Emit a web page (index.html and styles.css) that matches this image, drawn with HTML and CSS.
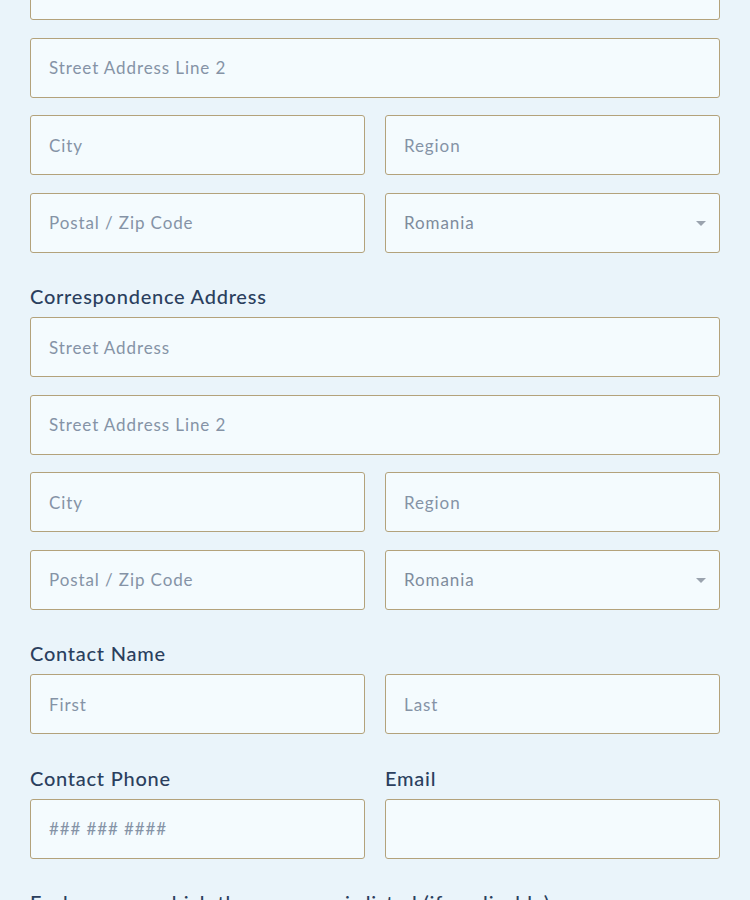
FILE: index.html
```html
<!DOCTYPE html>
<html lang="en">
<head>
<meta charset="utf-8">
<title>Company Form</title>
<link rel="stylesheet" href="styles.css">
</head>
<body>
<form class="form">
  <div class="row full"><input class="field" type="text" placeholder="Street Address"></div>
  <div class="row full"><input class="field" type="text" placeholder="Street Address Line 2"></div>
  <div class="row">
    <input class="field" type="text" placeholder="City">
    <input class="field" type="text" placeholder="Region">
  </div>
  <div class="row">
    <input class="field" type="text" placeholder="Postal / Zip Code">
    <div class="select-wrap"><select class="field select"><option>Romania</option></select></div>
  </div>

  <div class="label">Correspondence Address</div>
  <div class="row full"><input class="field" type="text" placeholder="Street Address"></div>
  <div class="row full"><input class="field" type="text" placeholder="Street Address Line 2"></div>
  <div class="row">
    <input class="field" type="text" placeholder="City">
    <input class="field" type="text" placeholder="Region">
  </div>
  <div class="row">
    <input class="field" type="text" placeholder="Postal / Zip Code">
    <div class="select-wrap"><select class="field select"><option>Romania</option></select></div>
  </div>

  <div class="label">Contact Name</div>
  <div class="row">
    <input class="field" type="text" placeholder="First">
    <input class="field" type="text" placeholder="Last">
  </div>

  <div class="row pair">
    <div class="group">
      <div class="label">Contact Phone</div>
      <input class="field" type="text" placeholder="### ### ####">
    </div>
    <div class="group">
      <div class="label">Email</div>
      <input class="field" type="text">
    </div>
  </div>

  <div class="label">Exchange on which the company is listed (if applicable)</div>
  <div class="row full"><input class="field" type="text"></div>
</form>
</body>
</html>
```
FILE: styles.css
```css
html, body {
  margin: 0;
  padding: 0;
  background: #eaf4fa;
}
body {
  font-family: Lato, "Noto Sans", sans-serif;
  color: #2c3e5c;
}
.form {
  padding: 0 30px;
  margin-top: -57.5px;
}
.row {
  display: grid;
  grid-template-columns: 1fr 1fr;
  column-gap: 20px;
  margin-top: 17.5px;
}
.row.full {
  grid-template-columns: 1fr;
}
.label {
  font-size: 20px;
  line-height: 24px;
  font-weight: 500;
  letter-spacing: 0.75px;
  color: #2b3f5e;
  margin-top: 31.5px;
  margin-bottom: 9px;
}
.label + .row {
  margin-top: 0;
}
.row.pair {
  margin-top: 0;
}
.field {
  display: block;
  width: 100%;
  height: 60px;
  box-sizing: border-box;
  margin: 0;
  padding: 0 18px;
  border: 1px solid #b3a27b;
  border-radius: 3px;
  background: #f4fbfe;
  font-family: inherit;
  font-size: 17px;
  letter-spacing: 0.9px;
  color: #2c3e5c;
  outline: none;
}
.field::placeholder {
  color: #8593a6;
  opacity: 1;
}
.select-wrap {
  position: relative;
}
.select {
  appearance: none;
  -webkit-appearance: none;
  color: #7e8b9c;
}
.select-wrap::after {
  content: "";
  position: absolute;
  right: 14px;
  top: 28px;
  width: 0;
  height: 0;
  border-left: 5px solid transparent;
  border-right: 5px solid transparent;
  border-top: 5px solid #9aa3ae;
  pointer-events: none;
}
```
